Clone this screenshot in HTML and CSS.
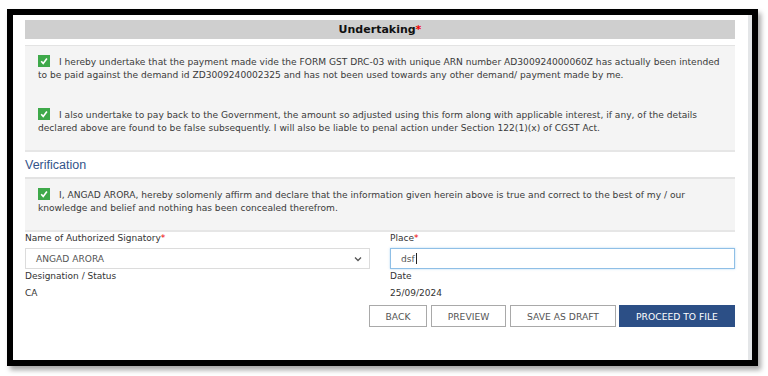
FILE: index.html
```html
<!DOCTYPE html>
<html>
<head>
<meta charset="utf-8">
<link rel="stylesheet" href="styles.css">
</head>
<body>
<div class="frame">
  <div class="content">
    <div class="section-head">Undertaking<span class="req">*</span></div>
    <div class="panel panel-first">
      <p class="stmt"><span class="check"><svg viewBox="0 0 12 12" width="12" height="12"><path d="M3.2 6.3 L5.2 8.4 L8.9 3.6" fill="none" stroke="#fff" stroke-width="1.6"/></svg></span>I hereby undertake that the payment made vide the FORM GST DRC-03 with unique ARN number AD300924000060Z has actually been intended to be paid against the demand id ZD3009240002325 and has not been used towards any other demand/ payment made by me.</p>
      <p class="stmt stmt-second"><span class="check"><svg viewBox="0 0 12 12" width="12" height="12"><path d="M3.2 6.3 L5.2 8.4 L8.9 3.6" fill="none" stroke="#fff" stroke-width="1.6"/></svg></span>I also undertake to pay back to the Government, the amount so adjusted using this form along with applicable interest, if any, of the details declared above are found to be false subsequently. I will also be liable to penal action under Section 122(1)(x) of CGST Act.</p>
    </div>
    <div class="verif-title">Verification</div>
    <div class="panel">
      <p class="stmt"><span class="check"><svg viewBox="0 0 12 12" width="12" height="12"><path d="M3.2 6.3 L5.2 8.4 L8.9 3.6" fill="none" stroke="#fff" stroke-width="1.6"/></svg></span>I, ANGAD ARORA, hereby solomenly affirm and declare that the information given herein above is true and correct to the best of my / our knowledge and belief and nothing has been concealed therefrom.</p>
    </div>
    <div class="fields">
      <div class="field">
        <div class="label">Name of Authorized Signatory<span class="req">*</span></div>
        <div class="select"><span>ANGAD ARORA</span><svg class="chev" viewBox="0 0 8 6" width="8" height="6"><path d="M1 1.5 L4 4.5 L7 1.5" fill="none" stroke="#555" stroke-width="1.3"/></svg></div>
        <div class="label label-sub">Designation / Status</div>
        <div class="value">CA</div>
      </div>
      <div class="field">
        <div class="label">Place<span class="req">*</span></div>
        <div class="input"><span>dsf</span><span class="caret"></span></div>
        <div class="label label-sub">Date</div>
        <div class="value">25/09/2024</div>
      </div>
    </div>
    <div class="actions">
      <button class="btn btn-back">BACK</button>
      <button class="btn btn-preview">PREVIEW</button>
      <button class="btn btn-draft">SAVE AS DRAFT</button>
      <button class="btn btn-primary">PROCEED TO FILE</button>
    </div>
  </div>
</div>
</body>
</html>
```

FILE: styles.css
```css
* { box-sizing: border-box; }
html, body { margin: 0; padding: 0; background: #fff; }
body { width: 768px; height: 376px; overflow: hidden; font-family: "DejaVu Sans", Verdana, sans-serif; color: #333; }

.frame {
  margin: 9px 0 0 7px;
  width: 751px;
  height: 357px;
  border: 6px solid #000;
  background: #fff;
  box-shadow: inset -4px 0 0 #e4e6e8, 3px 4px 5px rgba(0,0,0,0.35);
  padding: 5px 17px 0 12px;
}

.section-head {
  height: 19px;
  background: #cfcfcf;
  text-align: center;
  font-family: "DejaVu Sans", Verdana, sans-serif;
  font-weight: bold;
  font-size: 11px;
  line-height: 19px;
  color: #111;
}
.req { color: #e00; }

.panel {
  background: #f4f4f4;
  border-top: 1px solid #e3e3e3;
  border-bottom: 2px solid #e6e6e6;
  padding: 9px 13px 15px 13px;
}
.panel-first { margin-top: 6px; }

.stmt {
  margin: 0;
  font-size: 9.1px;
  line-height: 13px;
  color: #3a3a3a;
}
.stmt-second { margin-top: 26px; }

.check {
  display: inline-block;
  width: 12px;
  height: 12px;
  background: #3ea94a;
  vertical-align: -2px;
  margin-right: 9px;
}
.check svg { display: block; }

.verif-title {
  font-family: "Liberation Sans", Arial, sans-serif;
  font-size: 12.5px;
  color: #33548a;
  height: 26px;
  line-height: 26px;
  border-bottom: 1px solid #e3e3e3;
}

.fields {
  display: grid;
  grid-template-columns: 345px 345px;
  column-gap: 20px;
  margin-top: 0;
}
.label {
  font-size: 9px;
  line-height: 12px;
  color: #333;
}
.select, .input {
  margin-top: 4px;
  height: 21px;
  border: 1px solid #dcdcdc;
  background: #fff;
  display: flex;
  align-items: center;
  padding: 0 10px;
  font-size: 9.1px;
  color: #555;
}
.select span { flex: 1; }
.chev { display: block; margin-right: -3px; }
.input {
  border: 1px solid #8fbfe6;
  box-shadow: 0 0 2px rgba(102,175,233,0.5);
}
.caret { display: inline-block; width: 1px; height: 11px; background: #222; margin-left: 1px; }
.label-sub { margin-top: 1px; }
.value {
  font-size: 9px;
  line-height: 12px;
  margin-top: 5px;
  color: #333;
}

.actions {
  display: flex;
  justify-content: flex-end;
  gap: 4px;
  margin-top: 6px;
}
.btn {
  height: 22px;
  border: 1px solid #a9a9a9;
  background: #fff;
  color: #555;
  font-family: "DejaVu Sans", Verdana, sans-serif;
  font-size: 9.2px;
  padding: 0;
  text-align: center;
}
.btn-back { width: 58px; }
.btn-preview { width: 75px; }
.btn-draft { width: 106px; }
.btn-primary { width: 116px; background: #2c4f86; border-color: #2c4f86; color: #fff; margin-left: -1px; }
```
